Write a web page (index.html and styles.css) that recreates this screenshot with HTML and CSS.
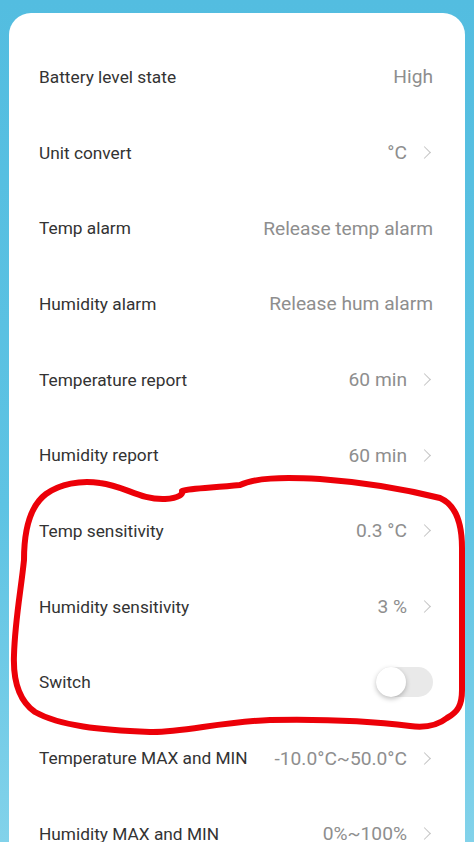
FILE: index.html
```html
<!DOCTYPE html>
<html>
<head>
<meta charset="utf-8">
<link rel="stylesheet" href="styles.css">
</head>
<body>
<div class="page">
  <div class="card">
    <div class="row"><span class="label">Battery level state</span><span class="value nochev">High</span></div>
    <div class="row"><span class="label">Unit convert</span><span class="value">°C</span><span class="chev"></span></div>
    <div class="row"><span class="label">Temp alarm</span><span class="value nochev">Release temp alarm</span></div>
    <div class="row"><span class="label">Humidity alarm</span><span class="value nochev">Release hum alarm</span></div>
    <div class="row"><span class="label">Temperature report</span><span class="value">60 min</span><span class="chev"></span></div>
    <div class="row"><span class="label">Humidity report</span><span class="value">60 min</span><span class="chev"></span></div>
    <div class="row"><span class="label">Temp sensitivity</span><span class="value">0.3 °C</span><span class="chev"></span></div>
    <div class="row"><span class="label">Humidity sensitivity</span><span class="value">3 %</span><span class="chev"></span></div>
    <div class="row"><span class="label">Switch</span><span class="toggle"><span class="knob"></span></span></div>
    <div class="row"><span class="label">Temperature MAX and MIN</span><span class="value">-10.0°C~50.0°C</span><span class="chev"></span></div>
    <div class="row"><span class="label">Humidity MAX and MIN</span><span class="value">0%~100%</span><span class="chev"></span></div>
  </div>
  <svg class="mark" width="474" height="842" viewBox="0 0 474 842">
    <path d="M24 560 C24 530 30 506 46 494 C60 484 80 480 100 483 C125 486 140 500 165 499 C180 498 183 494 182 491 C190 488 210 488 240 485 C255 478 280 477 320 479 C360 482 400 488 440 498 C456 505 462 522 462 548 L462 690 C462 705 458 712 447 718 C437 726 425 728 410 726 C370 721 320 719 270 720 C220 722 180 733 150 732 C100 730 60 726 35 712 C18 700 13 680 14 655 C15 620 21 590 24 560 Z" fill="none" stroke="#ec0008" stroke-width="6" stroke-linecap="round" stroke-linejoin="round"/>
  </svg>
</div>
</body>
</html>
```

FILE: styles.css
```css
html, body {
  margin: 0;
  padding: 0;
}
body {
  width: 474px;
  height: 842px;
  overflow: hidden;
  font-family: Roboto, "Liberation Sans", sans-serif;
}
.page {
  position: relative;
  width: 474px;
  height: 842px;
  background: linear-gradient(180deg, #53bde0 0%, #5ec3e3 60%, #82d2ea 100%);
  padding: 13px 9px 0 9px;
  box-sizing: border-box;
}
.card {
  background: #ffffff;
  border-radius: 22px 22px 0 0;
  padding-top: 26px;
  height: 900px;
}
.row {
  display: flex;
  align-items: center;
  height: 75.7px;
  padding: 0 32px 0 30px;
}
.label {
  flex: 1;
  font-size: 17.3px;
  color: #333333;
  white-space: nowrap;
}
.value {
  font-size: 19.2px;
  color: #8e8e8e;
  white-space: nowrap;
}
.chev {
  width: 8px;
  height: 8px;
  border-top: 1.5px solid #c4c4c4;
  border-right: 1.5px solid #c4c4c4;
  transform: rotate(45deg);
  margin-left: 13px;
  margin-right: 4px;
}
.toggle {
  position: relative;
  width: 57px;
  height: 30px;
  border-radius: 15px;
  background: #e9e9e9;
}
.knob {
  position: absolute;
  left: 0;
  top: 0;
  width: 30px;
  height: 30px;
  border-radius: 50%;
  background: #ffffff;
  box-shadow: 0 2px 5px rgba(0,0,0,0.25);
}
.mark {
  position: absolute;
  left: 0;
  top: 0;
}
```
